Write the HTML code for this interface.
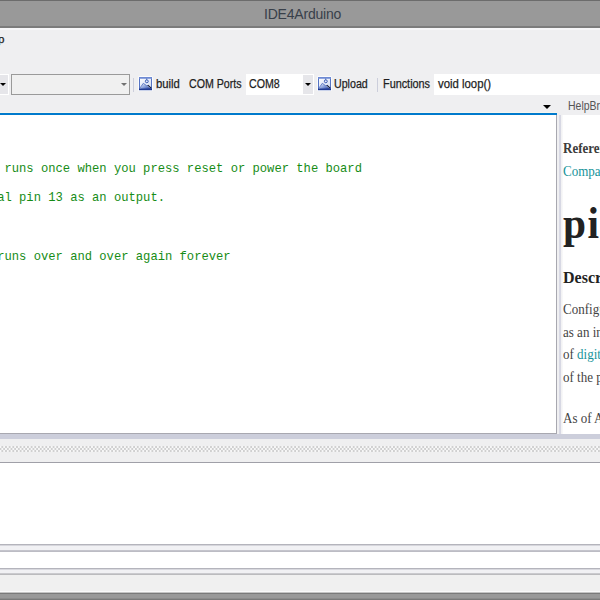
<!DOCTYPE html>
<html><head><meta charset="utf-8">
<style>
*{margin:0;padding:0;box-sizing:border-box}
html,body{width:600px;height:600px;overflow:hidden;background:#EFEFF1;font-family:"Liberation Sans",sans-serif}
.a{position:absolute}
.t{position:absolute;white-space:pre;line-height:14px}
</style></head><body>
<svg width="0" height="0" style="position:absolute">
<defs>
<linearGradient id="sky" x1="0" y1="0" x2="0.6" y2="1"><stop offset="0" stop-color="#ffffff"/><stop offset="1" stop-color="#d0daf2"/></linearGradient>
<linearGradient id="mt" x1="0" y1="0" x2="1" y2="1"><stop offset="0" stop-color="#f4f7fd"/><stop offset="0.55" stop-color="#7d96d6"/><stop offset="1" stop-color="#1c3490"/></linearGradient>
<symbol id="pic" viewBox="0 0 15 15">
<rect x="0" y="0" width="15" height="15" rx="1.5" fill="#fbfbfd"/>
<rect x="1.5" y="1.5" width="12" height="12.3" fill="url(#sky)" stroke="#5574c4" stroke-width="1"/>
<rect x="1" y="1.2" width="13" height="1.6" fill="#7590d6"/>
<line x1="8.6" y1="2.5" x2="8.6" y2="4" stroke="#4868b8" stroke-width="0.8"/>
<circle cx="8.8" cy="5.3" r="1.45" fill="#dfe6f8" stroke="#3a5ab2" stroke-width="1"/>
<polygon points="2,13 5.3,7.3 8.5,9.6 13.5,13" fill="url(#mt)"/>
<polyline points="2,12 5.3,7.3 8.5,9.6 10,9.6" fill="none" stroke="#4b6abc" stroke-width="0.8"/>
<line x1="9.8" y1="9.2" x2="13.2" y2="12.2" stroke="#0e1632" stroke-width="1.1"/>
<rect x="1" y="12.6" width="13" height="1.3" fill="#17308a"/>
</symbol>
</defs></svg>
<!-- title bar -->
<div class="a" style="left:0;top:0;width:600px;height:1px;background:#6c6c6c"></div>
<div class="a" style="left:0;top:1px;width:600px;height:25px;background:#999999"></div>
<div class="a" style="left:0;top:26px;width:600px;height:2px;background:#7c7c7c"></div>
<div class="a" style="left:0;top:28px;width:600px;height:2px;background:#f7f7f9"></div>
<div class="t" style="left:264px;top:7px;font-size:14px;letter-spacing:-0.2px;color:#38404a">IDE4Arduino</div>
<!-- menu -->
<div class="t" style="left:-19.3px;top:32.4px;font-size:11.6px;color:#1e1e1e;-webkit-text-stroke:0.25px #1e1e1e">Help</div>

<!-- toolbar -->
<div class="a" style="left:-10px;top:74px;width:19px;height:21px;background:#fff"></div>
<div class="a" style="left:-10px;top:75px;width:18px;height:19px;background:#E6E6EA"></div>
<div class="a" style="left:0px;top:83px;width:0;height:0;border-left:3px solid transparent;border-right:3px solid transparent;border-top:3.5px solid #000"></div>

<div class="a" style="left:11px;top:74px;width:119px;height:21px;border:1px solid #9a9a9a;background:#F0F0F0"></div>
<div class="a" style="left:120.7px;top:83px;width:0;height:0;border-left:3px solid transparent;border-right:3px solid transparent;border-top:3.5px solid #717171"></div>
<div class="a" style="left:133px;top:78px;width:1px;height:14px;background:#CCCEDB"></div>

<svg class="a" style="left:138px;top:76px" width="15" height="15"><use href="#pic"/></svg>
<div class="t" style="left:156px;top:77px;font-size:12px;color:#1e1e1e;-webkit-text-stroke:0.25px #1e1e1e;transform:scaleX(0.94);transform-origin:0 0">build</div>
<div class="t" style="left:189px;top:77px;font-size:12px;color:#1e1e1e;-webkit-text-stroke:0.25px #1e1e1e;transform:scaleX(0.886);transform-origin:0 0">COM Ports</div>
<div class="a" style="left:246px;top:74px;width:68px;height:21px;background:#fff"></div>
<div class="a" style="left:303px;top:75px;width:10px;height:19px;background:#E6E6EA"></div>
<div class="a" style="left:305.2px;top:83px;width:0;height:0;border-left:3px solid transparent;border-right:3px solid transparent;border-top:3.5px solid #000"></div>
<div class="t" style="left:249px;top:77px;font-size:12px;color:#1e1e1e;-webkit-text-stroke:0.25px #1e1e1e;transform:scaleX(0.886);transform-origin:0 0">COM8</div>
<svg class="a" style="left:317px;top:76px" width="15" height="15"><use href="#pic"/></svg>
<div class="t" style="left:334px;top:77px;font-size:12px;color:#1e1e1e;-webkit-text-stroke:0.25px #1e1e1e;transform:scaleX(0.887);transform-origin:0 0">Upload</div>
<div class="a" style="left:377px;top:78px;width:1px;height:14px;background:#CCCEDB"></div>
<div class="t" style="left:383px;top:77px;font-size:12px;color:#1e1e1e;-webkit-text-stroke:0.25px #1e1e1e;transform:scaleX(0.904);transform-origin:0 0">Functions</div>
<div class="a" style="left:434px;top:74px;width:170px;height:21px;background:#fff"></div>
<div class="t" style="left:438px;top:77px;font-size:12px;color:#1e1e1e;-webkit-text-stroke:0.25px #1e1e1e;transform:scaleX(0.946);transform-origin:0 0">void loop()</div>

<!-- doc tab strip -->
<div class="a" style="left:543px;top:105px;width:0;height:0;border-left:4px solid transparent;border-right:4px solid transparent;border-top:4px solid #000"></div>
<div class="a" style="left:0;top:112px;width:557px;height:1px;background:#F6F6EE"></div>
<div class="a" style="left:0;top:113px;width:557px;height:2px;background:#007ACC"></div>
<div class="t" style="left:567.5px;top:99px;font-size:12px;color:#555;transform:scaleX(0.873);transform-origin:0 0">HelpBrowser</div>

<!-- editor -->
<div class="a" style="left:0;top:115px;width:557px;height:319px;background:#fff;border-right:1px solid #A8A8B0;border-bottom:1px solid #A8A8B0"></div>
<!-- right panel -->
<div class="a" style="left:562px;top:115px;width:40px;height:319px;background:#fff"></div>
<div class="a" style="left:557px;top:115px;width:6px;height:319px;background:linear-gradient(to right,#F0F0F2 0,#F0F0F2 2px,#DADBE6 2px,#D6D7E3 4px,#F0F0F2 4px,#FAFAFA 6px)"></div>

<!-- code -->
<div class="t" style="left:-156px;top:162px;font-family:'Liberation Mono',monospace;font-size:12.17px;color:#168c16">// the setup function runs once when you press reset or power the board</div>
<div class="t" style="left:-156px;top:191px;font-family:'Liberation Mono',monospace;font-size:12.17px;color:#168c16">  // initialize digital pin 13 as an output.</div>
<div class="t" style="left:-156px;top:250px;font-family:'Liberation Mono',monospace;font-size:12.17px;color:#168c16">// the loop function runs over and over again forever</div>
<!-- help content -->
<div class="t" style="left:563px;top:141px;font-family:'Liberation Serif',serif;font-size:15px;font-weight:bold;color:#3c3c3c;transform:scaleX(0.867);transform-origin:0 0">Reference</div>
<div class="t" style="left:563px;top:165px;font-family:'Liberation Serif',serif;font-size:14px;color:#17939a;transform:scaleX(0.93);transform-origin:0 0">Comparison</div>
<div class="t" style="left:563px;top:201px;font-family:'Liberation Serif',serif;font-size:44px;font-weight:bold;line-height:46px;letter-spacing:1.6px;color:#222;transform:scaleX(0.94);transform-origin:0 0">pinMode</div>
<div class="t" style="left:563px;top:271px;font-family:'Liberation Serif',serif;font-size:16px;font-weight:bold;color:#222">Description</div>
<div class="t" style="left:563px;top:303px;font-family:'Liberation Serif',serif;font-size:14px;color:#444;transform:scaleX(0.93);transform-origin:0 0">Configures</div>
<div class="t" style="left:563px;top:326px;font-family:'Liberation Serif',serif;font-size:14px;color:#444;transform:scaleX(0.93);transform-origin:0 0">as an input</div>
<div class="t" style="left:563px;top:348px;font-family:'Liberation Serif',serif;font-size:14px;color:#444;transform:scaleX(0.93);transform-origin:0 0">of <span style="color:#17939a">digital</span></div>
<div class="t" style="left:563px;top:371px;font-family:'Liberation Serif',serif;font-size:14px;color:#444;transform:scaleX(0.93);transform-origin:0 0">of the pin</div>
<div class="t" style="left:563px;top:412px;font-family:'Liberation Serif',serif;font-size:14px;color:#444;transform:scaleX(0.93);transform-origin:0 0">As of Arduino</div>
<!-- bottom -->
<div class="a" style="left:0;top:434px;width:600px;height:5px;background:#CCCEDB"></div>
<div class="a" style="left:0;top:439px;width:600px;height:23px;background:#EFEFF0"></div>
<svg class="a" style="left:0;top:446px" width="600" height="6"><defs><pattern id="grip" patternUnits="userSpaceOnUse" width="3.66" height="4" x="1.4" y="0"><rect x="0.2" y="0.2" width="1.45" height="1.6" fill="#bdbdbd"/><rect x="2.03" y="0.2" width="1.45" height="1.6" fill="#fcfcfc"/><rect x="0.2" y="2.2" width="1.45" height="1.6" fill="#fcfcfc"/><rect x="2.03" y="2.2" width="1.45" height="1.6" fill="#bdbdbd"/></pattern></defs><rect width="600" height="6" fill="url(#grip)"/></svg>
<div class="a" style="left:0;top:462px;width:600px;height:1px;background:#A0A0A8"></div>
<div class="a" style="left:0;top:463px;width:600px;height:81px;background:#fff"></div>
<div class="a" style="left:0;top:544px;width:600px;height:1px;background:#B4B4BC"></div>
<div class="a" style="left:0;top:545px;width:600px;height:1px;background:#D6D6DC"></div>
<div class="a" style="left:0;top:546px;width:600px;height:4px;background:#F1F1F4"></div>
<div class="a" style="left:0;top:550px;width:600px;height:1px;background:#C4C4CC"></div>
<div class="a" style="left:0;top:551px;width:600px;height:1px;background:#BCBCC4"></div>
<div class="a" style="left:0;top:552px;width:600px;height:16px;background:#fff"></div>
<div class="a" style="left:0;top:568px;width:600px;height:1px;background:#B4B4BC"></div>
<div class="a" style="left:0;top:569px;width:600px;height:1px;background:#D8D8DE"></div>
<div class="a" style="left:0;top:570px;width:600px;height:3px;background:#F1F1F4"></div>
<div class="a" style="left:0;top:573px;width:600px;height:1px;background:#CACACE"></div>
<div class="a" style="left:0;top:574px;width:600px;height:1px;background:#BBBBBE"></div>
<div class="a" style="left:0;top:575px;width:600px;height:16px;background:#F0F0F0"></div>
<div class="a" style="left:0;top:591px;width:600px;height:1px;background:#F9F9F9"></div>
<div class="a" style="left:0;top:592px;width:600px;height:1px;background:#C4C4C4"></div>
<div class="a" style="left:0;top:593px;width:600px;height:1px;background:#7A7A7A"></div>
<div class="a" style="left:0;top:594px;width:600px;height:4px;background:#999999"></div>
<div class="a" style="left:0;top:598px;width:600px;height:1px;background:#8C8C8C"></div>
<div class="a" style="left:0;top:599px;width:600px;height:1px;background:#7A7A7A"></div>
</body></html>
